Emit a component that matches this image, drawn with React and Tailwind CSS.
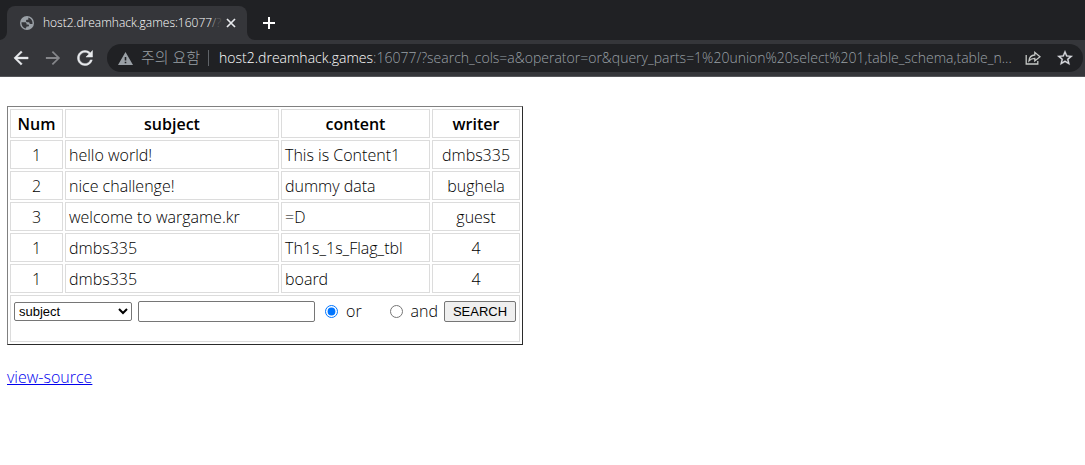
import { useState } from 'react';

const rows = [
  { num: 1, subject: "hello world!", content: "This is Content1", writer: "dmbs335" },
  { num: 2, subject: "nice challenge!", content: "dummy data", writer: "bughela" },
  { num: 3, subject: "welcome to wargame.kr", content: "=D", writer: "guest" },
  { num: 1, subject: "dmbs335", content: "Th1s_1s_Flag_tbl", writer: "4" },
  { num: 1, subject: "dmbs335", content: "board", writer: "4" },
];

// --- BROWSER TAB STRIP ---
function TabStrip() {
  return (
    <div className="flex h-10 items-end bg-[#202124] pl-[7px]">
      <div className="relative flex h-[34px] w-60 items-center rounded-t-lg bg-[#35363a] pl-[13px] pr-2 text-white">
        {/* curved feet of the tab */}
        <svg className="absolute -left-2 bottom-0 size-2" viewBox="0 0 8 8" fill="#35363a"><path d="M8 0v8H0a8 8 0 0 0 8-8z" /></svg>
        <svg className="absolute -right-2 bottom-0 size-2" viewBox="0 0 8 8" fill="#35363a"><path d="M0 0v8h8a8 8 0 0 1-8-8z" /></svg>
        <svg className="size-3.5 shrink-0" viewBox="0 0 14 14">
          <circle cx="7" cy="7" r="7" fill="#9aa0a6" />
          <path d="M1.500 6.300H5c1 0 1.500.600 1.500 1.400v.800h1.300c.800 0 1.200.500 1.200 1.100 0 .600-.500 1-1.100 1H6.700L5.800 12.500C3.200 12 1.300 9.600 1.500 6.300zM8.300 1.600c2.400.600 4.200 2.700 4.200 5.400 0 .400 0 .700-.100 1h-1.900c-.800 0-1.200-.500-1.200-1.200v-.600H7.200c-.800 0-1.200-.500-1.200-1.200 0-.700.500-1.200 1.200-1.200h1.100z" fill="#35363a" />
        </svg>
        <span className="ml-[9px] min-w-0 flex-1 whitespace-nowrap text-xs font-light">
          host2.dreamhack.games:16077<span className="text-[#9a9b9d]">/</span><span className="text-[#5f6063]">?</span>
        </span>
        <button aria-label="Close tab" className="flex size-4 shrink-0 items-center justify-center">
          <svg className="size-2.5" viewBox="0 0 10 10" fill="none" stroke="#e8eaed" strokeWidth="1.7"><path d="M1 1l8 8M9 1L1 9" /></svg>
        </button>
      </div>
      <button aria-label="New tab" className="ml-3.5 flex h-[34px] w-4 items-center justify-center">
        <svg className="size-3" viewBox="0 0 12 12" fill="none" stroke="#fff" strokeWidth="2"><path d="M6 0v12M0 6h12" /></svg>
      </button>
    </div>
  );
}

// --- TOOLBAR WITH ADDRESS BAR ---
function Toolbar() {
  return (
    <div className="flex h-[37px] items-center border-b border-[#55565a] bg-[#35363a] pl-[13px] pr-0.5">
      <button aria-label="Back" className="size-4">
        <svg viewBox="3 3 18 18" className="size-4" fill="#e8eaed" stroke="#e8eaed" strokeWidth=".5"><path d="M20 11H7.83l5.59-5.59L12 4l-8 8 8 8 1.41-1.41L7.83 13H20v-2z" /></svg>
      </button>
      <button aria-label="Forward" disabled className="ml-4 size-4">
        <svg viewBox="3 3 18 18" className="size-4" fill="#85868a"><path d="M12 4l-1.41 1.41L16.17 11H4v2h12.17l-5.58 5.59L12 20l8-8z" /></svg>
      </button>
      <button aria-label="Reload" className="ml-4 size-4">
        <svg viewBox="3.500 3.500 17 17" className="size-4" fill="#e8eaed" stroke="#e8eaed" strokeWidth=".5"><path d="M17.65 6.35C16.2 4.9 14.21 4 12 4c-4.42 0-7.99 3.58-7.99 8s3.57 8 7.99 8c3.73 0 6.84-2.55 7.73-6h-2.08c-.82 2.33-3.04 4-5.65 4-3.31 0-6-2.69-6-6s2.69-6 6-6c1.66 0 3.14.69 4.22 1.78L13 11h7V4l-2.35 2.35z" /></svg>
      </button>
      <div className="ml-3.5 flex h-7 min-w-0 flex-1 items-center rounded-full bg-[#202124] pl-[11px] pr-2.5 text-sm font-light text-[#9aa0a6]">
        <svg viewBox="0 0 15 13" className="h-[13px] w-[15px] shrink-0" fill="#9aa0a6"><path fillRule="evenodd" d="M7.500 0L15 13H0zM6.700 5v3.500h1.600V5zM6.700 9.700v1.500h1.600V9.700z" /></svg>
        <span className="ml-2 shrink-0 text-[15px]">주의 요함</span>
        <span className="ml-2 mr-2.5 h-4 w-px shrink-0 bg-[#5f6368]" />
        <span className="min-w-0 flex-1 whitespace-nowrap">
          <span className="text-white">host2.dreamhack.games</span>:16077/?search_cols=a&operator=or&query_parts=1%20union%20select%201,table_schema,table_n...
        </span>
        <button aria-label="Share" className="size-4 shrink-0">
          <svg viewBox="0 0 16 16" className="size-4" fill="none" stroke="#c4c7c5" strokeWidth="1.300"><path d="M1.200 5v9h11.600v-3M4 10.800C4.300 7.300 6.300 5.200 9.800 5V2.300L15 6.700l-5.200 4.200V8.300C7.300 8.300 5.500 9 4 10.800z" /></svg>
        </button>
        <button aria-label="Bookmark" className="ml-4 size-4 shrink-0">
          <svg viewBox="1.500 1.500 21 21" className="size-4" fill="#dadce0" stroke="#dadce0" strokeWidth=".4"><path d="M22 9.240l-7.190-.620L12 2 9.190 8.630 2 9.240l5.460 4.730L5.820 21 12 17.270 18.180 21l-1.630-7.030L22 9.240zM12 15.400l-3.760 2.270 1-4.280-3.320-2.880 4.380-.380L12 6.100l1.710 4.040 4.380.380-3.320 2.880 1 4.280L12 15.400z" /></svg>
        </button>
      </div>
    </div>
  );
}

export default function App() {
  const [column, setColumn] = useState("subject");
  const [query, setQuery] = useState("");
  const [operator, setOperator] = useState("or");

  return (
    <div className="min-h-screen bg-white font-['Open_Sans','Noto_Sans_CJK_KR',sans-serif] text-black">
      <header>
        <TabStrip />
        <Toolbar />
      </header>

      <main className="px-[7px] pt-[29px] font-light">
        <table className="w-full max-w-[516px] table-fixed border-separate border-spacing-0.5 border border-t-[#808080] border-r-[#2b2b2b] border-b-[#2b2b2b] border-l-[#808080] text-base leading-[25px]">
          <colgroup>
            <col className="w-[53px]" />
            <col className="w-[214px]" />
            <col className="w-[149px]" />
            <col className="w-[88px]" />
          </colgroup>
          <thead>
            <tr>
              {["Num", "subject", "content", "writer"].map((title) => (
                <th key={title} className="border border-[#dcdcdc] pt-0.5 font-semibold">{title}</th>
              ))}
            </tr>
          </thead>
          <tbody>
            {rows.map((row, i) => (
              <tr key={i}>
                <td className="border border-[#dcdcdc] pt-0.5 text-center">{row.num}</td>
                <td className="border border-[#dcdcdc] px-[3px] pt-0.5">{row.subject}</td>
                <td className="border border-[#dcdcdc] px-[3px] pt-0.5">{row.content}</td>
                <td className="border border-[#dcdcdc] pt-0.5 text-center">{row.writer}</td>
              </tr>
            ))}
          </tbody>
          <tfoot>
            <tr>
              <td colSpan={4} className="border border-[#dcdcdc] px-[3px] pt-[3px] pb-[17px]">
                <form className="flex items-center" onSubmit={(e) => e.preventDefault()}>
                  <select
                    aria-label="Column"
                    value={column}
                    onChange={(e) => setColumn(e.target.value)}
                    className="h-[19px] w-[118px] rounded-xs border border-[#767676] bg-white font-['Liberation_Sans',sans-serif] text-[13px] leading-4"
                  >
                    <option>subject</option>
                    <option>content</option>
                    <option>writer</option>
                  </select>
                  <input
                    type="text"
                    aria-label="Search text"
                    value={query}
                    onChange={(e) => setQuery(e.target.value)}
                    className="ml-1.5 h-[21px] w-[177px] min-w-0 rounded-xs border border-[#767676] px-0.5 font-['Liberation_Sans',sans-serif] text-[13px]"
                  />
                  <label className="ml-2.5 flex items-center gap-2">
                    <input type="radio" name="operator" className="size-[13px]" checked={operator === "or"} onChange={() => setOperator("or")} />
                    or
                  </label>
                  <label className="ml-auto flex items-center gap-2">
                    <input type="radio" name="operator" className="size-[13px]" checked={operator === "and"} onChange={() => setOperator("and")} />
                    and
                  </label>
                  <button className="ml-1.5 h-[21px] w-[72px] rounded-xs border border-[#767676] bg-[#efefef] font-['Liberation_Sans',sans-serif] text-[13px] leading-4">
                    SEARCH
                  </button>
                </form>
              </td>
            </tr>
          </tfoot>
        </table>

        <a href="#view-source" className="mt-5 inline-block text-base text-[#0000ee] underline">view-source</a>
      </main>
    </div>
  );
}
